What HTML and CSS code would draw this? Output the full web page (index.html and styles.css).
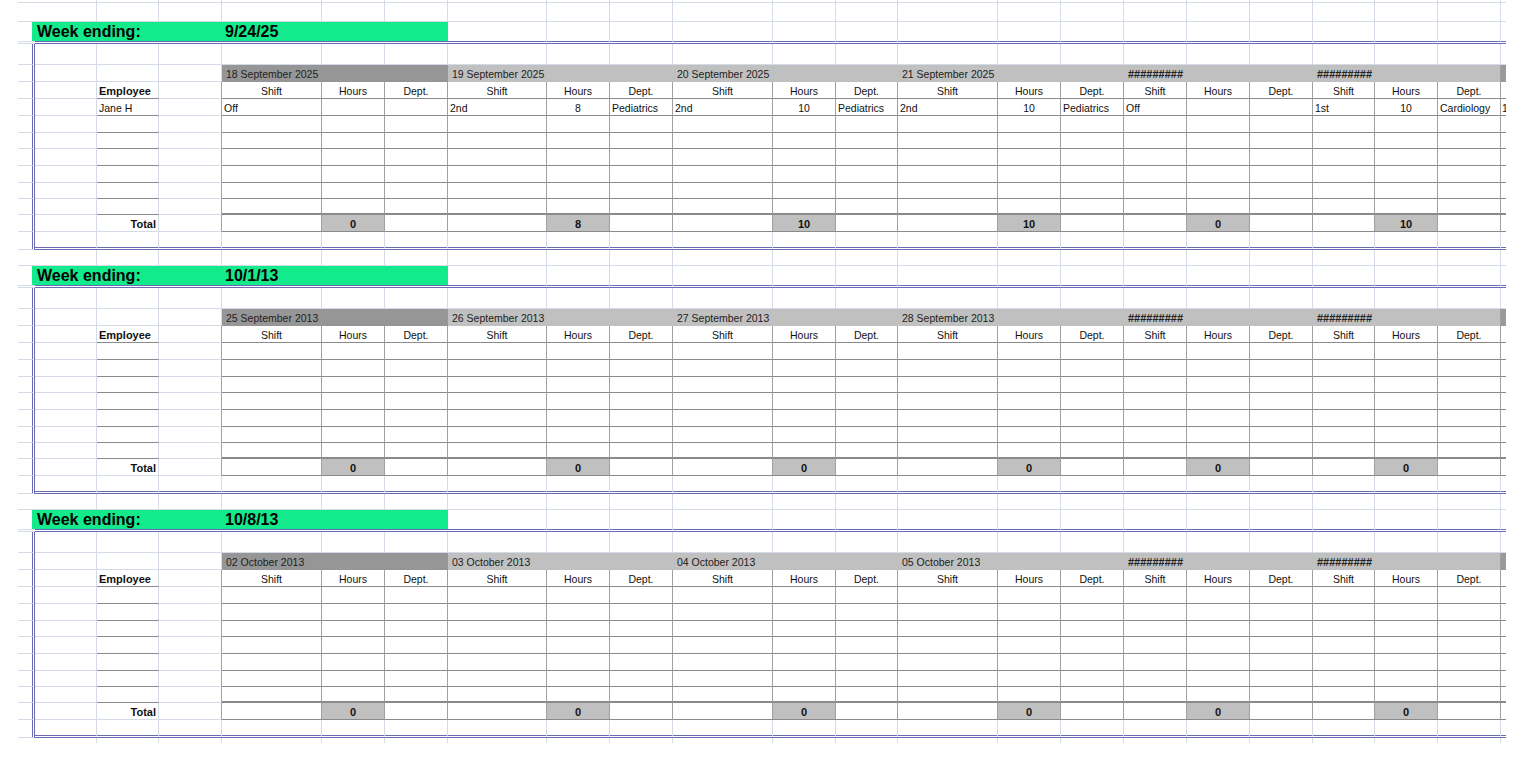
FILE: index.html
```html
<!DOCTYPE html>
<html lang="en">
<head>
<meta charset="utf-8">
<title>Weekly Schedule</title>
<link rel="stylesheet" href="styles.css">
</head>
<body>
<div class="sheet" id="sheet"></div>
<script src="script.js"></script>
</body>
</html>
```

FILE: styles.css
```css
:root {
  --grid: #d4dae6;
  --frame: #6a6ab4;
  --line: #8a8a8a;
  --vline: #a0a0a0;
  --green: #13ea8b;
}
* { box-sizing: border-box; }
html, body { margin: 0; background: #fff; }
body {
  font-family: "Liberation Sans", Arial, sans-serif;
  font-size: 10.5px;
  color: #111;
}
.sheet {
  display: grid;
  grid-template-columns: 17px 62px 62px 63px 100px 63px 63px 99px 63px 63px 100px 63px 62px 100px 63px 63px 63px 63px 63px 62px 63px 63px 5px;
  grid-template-rows: 3px 19px
    repeat(2, 22px 21px 17px 17px 17px 17px 16px 17px 17px 16px 16px 17px 18px 16px)
    22px 21px 17px 17px 17px 17px 16px 17px 17px 16px 16px 17px 18px 5px;
  width: 1488px;
  margin-left: 18px;
  overflow: hidden;
}
.cell {
  display: flex;
  align-items: center;
  justify-content: flex-start;
  padding: 2px 2px 0;
  border-right: 1px solid var(--grid);
  border-bottom: 1px solid var(--grid);
  white-space: nowrap;
  overflow: hidden;
  min-width: 0;
  line-height: 1.15;
}
.a { border-right: none; }
.a.fl { border-right: 3px double var(--frame); }
.ga {
  border-bottom: 3px double var(--grid);
  background: linear-gradient(to right, transparent 14px, var(--green) 14px);
  background-clip: padding-box;
}
.w { border-right: none; padding: 2px 0 0 1px; }
.ft, .fb { border-bottom: 3px double var(--frame); }
.green {
  background: var(--green);
  background-clip: padding-box;
  border-right: none;
  font-size: 16px;
  font-weight: 700;
  color: #000;
}
.green.val { padding-left: 3px; }
.date {
  background: #c0c0c0;
  border: none;
  padding-left: 4px;
  color: #222;
}
.date.first { background: #969696; }
.date.lastday { border-right: 1px solid #a0a0a0; }
.wdate { background: #9a9a9a; border-bottom: none; }
.emp { border-bottom-color: var(--line); }
.dr { border-right-color: var(--vline); }
.td { border-right-color: var(--vline); border-bottom-color: var(--line); }
.wt { border-bottom-color: var(--line); }
.thick { border-bottom-width: 2px; }
.tot { background: #c0c0c0; background-clip: padding-box; }
.c { justify-content: center; }
.r { justify-content: flex-end; }
.bold { font-weight: 700; font-size: 11px; }
.end { border-bottom: none; }
.s3 { grid-column: span 3; }
```

FILE: script.js
```js
(function () {
  var weeks = [
    {
      end: '9/24/25',
      days: ['18 September 2025', '19 September 2025', '20 September 2025', '21 September 2025', '#########', '#########'],
      rows: [
        { name: 'Jane H', cells: [['Off', '', ''], ['2nd', '8', 'Pediatrics'], ['2nd', '10', 'Pediatrics'], ['2nd', '10', 'Pediatrics'], ['Off', '', ''], ['1st', '10', 'Cardiology']], more: '1st' }
      ],
      totals: ['0', '8', '10', '10', '0', '10']
    },
    {
      end: '10/1/13',
      days: ['25 September 2013', '26 September 2013', '27 September 2013', '28 September 2013', '#########', '#########'],
      rows: [],
      totals: ['0', '0', '0', '0', '0', '0']
    },
    {
      end: '10/8/13',
      days: ['02 October 2013', '03 October 2013', '04 October 2013', '05 October 2013', '#########', '#########'],
      rows: [],
      totals: ['0', '0', '0', '0', '0', '0']
    }
  ];

  var sheet = document.getElementById('sheet');

  function add(cls, text) {
    var d = document.createElement('div');
    d.className = 'cell ' + cls;
    if (text) d.textContent = text;
    sheet.appendChild(d);
  }

  function plainRow(last) {
    var e = last ? ' end' : '';
    add('a' + e);
    for (var i = 0; i < 21; i++) add('g' + e);
    add('w' + e);
  }

  plainRow(false);
  plainRow(false);

  weeks.forEach(function (wk, wi) {
    var i, d;
    /* title row */
    add('a ga');
    add('green s3 ft', 'Week ending:');
    add('green val s3 ft', wk.end);
    for (i = 0; i < 15; i++) add('g ft');
    add('w ft');

    /* gap row */
    add('a fl');
    for (i = 0; i < 21; i++) add('g');
    add('w');

    /* date row */
    add('a fl');
    add('g'); add('g'); add('g');
    wk.days.forEach(function (day, di) {
      var cls = 'date s3';
      if (di === 0) cls += ' first';
      if (di === 5) cls += ' lastday';
      if (day.charAt(0) === '#') cls += ' bold';
      add(cls, day);
    });
    add('w wdate');

    /* header row */
    add('a fl');
    add('g');
    add('g emp bold', 'Employee');
    add('g dr');
    for (d = 0; d < 6; d++) {
      add('td c', 'Shift');
      add('td c', 'Hours');
      add('td c', 'Dept.');
    }
    add('w wt');

    /* employee rows */
    for (var r = 0; r < 7; r++) {
      var row = wk.rows[r] || { name: '', cells: [], more: '' };
      var t = r === 6 ? ' thick' : '';
      add('a fl');
      add('g');
      add('g emp', row.name);
      add('g dr');
      for (d = 0; d < 6; d++) {
        var c = row.cells[d] || ['', '', ''];
        add('td' + t, c[0]);
        add('td c' + t, c[1]);
        add('td' + t, c[2]);
      }
      add('w wt' + t, row.more);
    }

    /* total row */
    add('a fl');
    add('g');
    add('g r bold', 'Total');
    add('g dr');
    for (d = 0; d < 6; d++) {
      add('td');
      add('td tot c bold', wk.totals[d]);
      add('td');
    }
    add('w wt');

    /* bottom row of frame */
    add('a fl');
    for (i = 0; i < 21; i++) add('g fb');
    add('w fb');

    /* spacer row */
    plainRow(wi === weeks.length - 1);
  });
})();
```
